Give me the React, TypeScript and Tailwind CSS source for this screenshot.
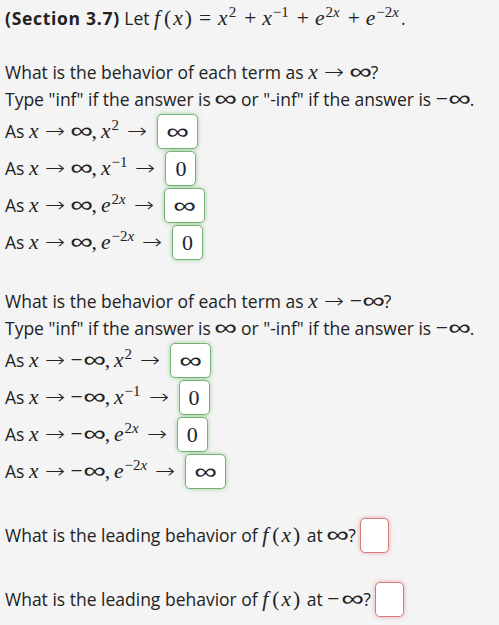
import React from 'react'

const mathFont = "font-['Liberation_Serif',serif] text-[21.5px]"

const I = ({ children }: { children: React.ReactNode }) => <span className="italic">{children}</span>

const Sup = ({ children }: { children: React.ReactNode }) => (
  <sup className="relative top-[-8px] mr-[2px] ml-[1px] text-[15px] leading-none">{children}</sup>
)

// KaTeX-ish glyphs: wide infinity and long arrow
const Inf = () => (
  <span className="inline-block w-[21px] scale-x-[1.45] text-center font-['DejaVu_Sans',sans-serif] text-[22px] font-extralight leading-none">
    ∞
  </span>
)
const Arrow = () => (
  <span className="mx-[7px] inline-block w-[18px] scale-x-[1.2] text-center font-['DejaVu_Sans',sans-serif] text-[20px] font-extralight leading-none">
    →
  </span>
)
const Minus = ({ wide }: { wide?: boolean }) => <span className={wide ? 'mr-[3px]' : 'mr-[1px]'}>−</span>

const Rel = ({ s }: { s: string }) => <span className="mx-[7px]">{s}</span>
const Bin = ({ s }: { s: string }) => <span className="mx-[6px]">{s}</span>

const M = ({ children }: { children: React.ReactNode }) => (
  <span className={mathFont + ' leading-none whitespace-nowrap'}>{children}</span>
)

const Fx = () => (
  <>
    <I>f</I>
    <span className="ml-[4px]">(</span>
    <span className="mx-[2px] italic">x</span>)
  </>
)

const Box = ({ value, tone = 'ok' }: { value?: string; tone?: 'ok' | 'bad' }) => {
  const width = value === '∞' ? 'w-[41px]' : value === '0' ? 'w-[31px]' : 'w-[29px]'
  const skin =
    tone === 'ok'
      ? 'border-[#74b474] shadow-[0_0_4px_rgba(92,170,92,0.55)]'
      : 'border-[#d67a7a] shadow-[0_0_4px_rgba(214,100,100,0.55)]'
  return (
    <span
      className={`ml-[4px] inline-flex h-[35px] ${width} shrink-0 items-center justify-center rounded-[5px] border bg-white ${skin} font-['Liberation_Serif',serif] text-[22px] text-[#1c2330]`}
    >
      {value === '∞' ? <Inf /> : value}
    </span>
  )
}

type Term = { base: string; exp: string; answer: string }

const terms: Term[] = [
  { base: 'x', exp: '2', answer: '∞' },
  { base: 'x', exp: '−1', answer: '0' },
  { base: 'e', exp: '2x', answer: '∞' },
  { base: 'e', exp: '−2x', answer: '0' },
]

const termsNeg: Term[] = [
  { base: 'x', exp: '2', answer: '∞' },
  { base: 'x', exp: '−1', answer: '0' },
  { base: 'e', exp: '2x', answer: '0' },
  { base: 'e', exp: '−2x', answer: '∞' },
]

const Exp = ({ e }: { e: string }) => {
  // numbers upright, x italic
  const parts = e.split(/(x)/).filter(Boolean)
  return (
    <Sup>
      {parts.map((p, i) => (p === 'x' ? <I key={i}>x</I> : <span key={i}>{p}</span>))}
    </Sup>
  )
}

const Limit = ({ neg, wide }: { neg?: boolean; wide?: boolean }) => (
  <>
    {neg && <Minus wide={wide} />}
    <Inf />
  </>
)

const Row = ({ t, neg }: { t: Term; neg?: boolean }) => (
  <div className="flex h-[37px] items-center">
    <span>
      As{' '}
      <M>
        <I>x</I>
        <Arrow />
        <Limit neg={neg} />,<span className="ml-[4px]"></span>
        <I>{t.base}</I>
        <Exp e={t.exp} />
        <Arrow />
      </M>
    </span>
    <Box value={t.answer} />
  </div>
)

const Section = ({ neg, list }: { neg?: boolean; list: Term[] }) => (
  <div className="mt-[27px]">
    <p>
      What is the behavior of each term as{' '}
      <M>
        <I>x</I>
        <Arrow />
        <Limit neg={neg} />
      </M>
      ?
    </p>
    <p>
      Type "inf" if the answer is{' '}
      <M>
        <Inf />
      </M>{' '}
      or "-inf" if the answer is{' '}
      <M>
        <Limit neg />
      </M>
      .
    </p>
    {list.map((t, i) => (
      <Row key={i} t={t} neg={neg} />
    ))}
  </div>
)

const Leading = ({ neg }: { neg?: boolean }) => (
  <div className="mt-[27px] flex h-[37px] items-center">
    <span>
      What is the leading behavior of{' '}
      <M>
        <Fx />
      </M>{' '}
      <span className="ml-[2px]">at</span>{' '}
      <M>
        <Limit neg={neg} wide />
      </M>
      ?
    </span>
    <Box tone="bad" />
  </div>
)

export default function App() {
  return (
    <div className="min-h-screen w-[499px] bg-[#f4f4f4] px-[5px] pt-[5px] font-['Open_Sans',sans-serif] text-[17.5px] leading-[27px] text-[#222]">
      <p>
        <span className="font-bold tracking-[0.7px]">(Section 3.7)</span> Let{' '}
        <M>
          <Fx />
          <Rel s="=" />
          <I>x</I>
          <Exp e="2" />
          <Bin s="+" />
          <I>x</I>
          <Exp e="−1" />
          <Bin s="+" />
          <I>e</I>
          <Exp e="2x" />
          <Bin s="+" />
          <I>e</I>
          <Exp e="−2x" />
        </M>
        .
      </p>

      <Section list={terms} />
      <Section neg list={termsNeg} />

      <Leading />
      <Leading neg />
    </div>
  )
}
